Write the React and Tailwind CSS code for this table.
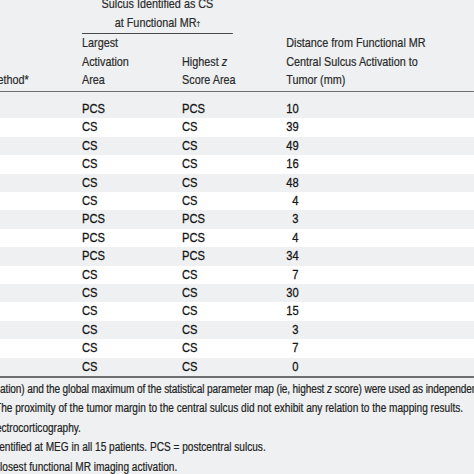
import React from 'react'

const rows = [
	['PCS', 'PCS', '10'],
	['CS', 'CS', '39'],
	['CS', 'CS', '49'],
	['CS', 'CS', '16'],
	['CS', 'CS', '48'],
	['CS', 'CS', '4'],
	['PCS', 'PCS', '3'],
	['PCS', 'PCS', '4'],
	['PCS', 'PCS', '34'],
	['CS', 'CS', '7'],
	['CS', 'CS', '30'],
	['CS', 'CS', '15'],
	['CS', 'CS', '3'],
	['CS', 'CS', '7'],
	['CS', 'CS', '0'],
]

const font = { fontFamily: '"Liberation Sans", Arial, sans-serif' }

// the table font is a condensed grotesque; we squeeze Liberation Sans horizontally to 82%
const App = () => {
	return (
		<div className="w-[474px] h-[474px] overflow-hidden bg-[#eef0f1]">
			<div className="w-[578px] origin-top-left scale-x-[0.82] text-[#1c1c1c]" style={font}>
				{/* header */}
				<div className="flex text-[13.2px] leading-[18.5px] text-[#2a2a2a] -mt-[5px] [-webkit-text-stroke:0.2px_#2a2a2a]">
					<div className="w-[100px] flex items-end">
						<span className="-ml-[3px]">ethod*</span>
					</div>
					<div className="w-[249px]">
						<div className="w-[184px] text-center">
							<div>Sulcus Identified as CS</div>
							<div>
								at Functional MR<sup className="text-[8px] relative -top-[1px]">†</sup>
							</div>
							<div className="h-[1px] bg-[#4a4a4a] mt-[1px]"></div>
						</div>
						<div className="flex">
							<div className="w-[122px]">
								<div>Largest</div>
								<div>Activation</div>
								<div>Area</div>
							</div>
							<div className="w-[127px]">
								<div>&nbsp;</div>
								<div>
									Highest <i>z</i>
								</div>
								<div>Score Area</div>
							</div>
						</div>
					</div>
					<div className="flex-1 pt-[39px]">
						<div>Distance from Functional MR</div>
						<div>Central Sulcus Activation to</div>
						<div>Tumor (mm)</div>
					</div>
				</div>

				<div className="h-[1.5px] bg-[#6e6e6e] mt-[1px]"></div>

				{/* body */}
				<div className="text-[13.6px] text-[#151515] [-webkit-text-stroke:0.3px_#151515]">
					{rows.map((r, i) => (
						<div
							key={i}
							className={
								'flex leading-[18.4px] ' +
								(i % 2 === 0 ? 'bg-[#eef0f1] ' : 'bg-white ') +
								(i === 0 ? 'pt-[8px]' : '')
							}
						>
							<div className="w-[100px]"></div>
							<div className="w-[122px]">{r[0]}</div>
							<div className="w-[127px]">{r[1]}</div>
							<div className="w-[15px] text-right">{r[2]}</div>
						</div>
					))}
				</div>

				<div className="h-[1.5px] bg-[#6e6e6e]"></div>

				{/* footnotes */}
				<div className="pt-[2px] text-[12.3px] leading-[19.5px] text-[#222] whitespace-nowrap [-webkit-text-stroke:0.2px_#222]">
					<div className="tracking-[-0.15px]">
						ation) and the global maximum of the statistical parameter map (ie, highest <i>z</i> score) were used as independent
					</div>
					<div className="-ml-[6px]">
						The proximity of the tumor margin to the central sulcus did not exhibit any relation to the mapping results.
					</div>
					<div className="-ml-[5px]">ectrocorticography.</div>
					<div className="-ml-[1px]">entified at MEG in all 15 patients. PCS = postcentral sulcus.</div>
					<div className="-ml-[6px]">closest functional MR imaging activation.</div>
				</div>
			</div>
		</div>
	)
}

export default App
